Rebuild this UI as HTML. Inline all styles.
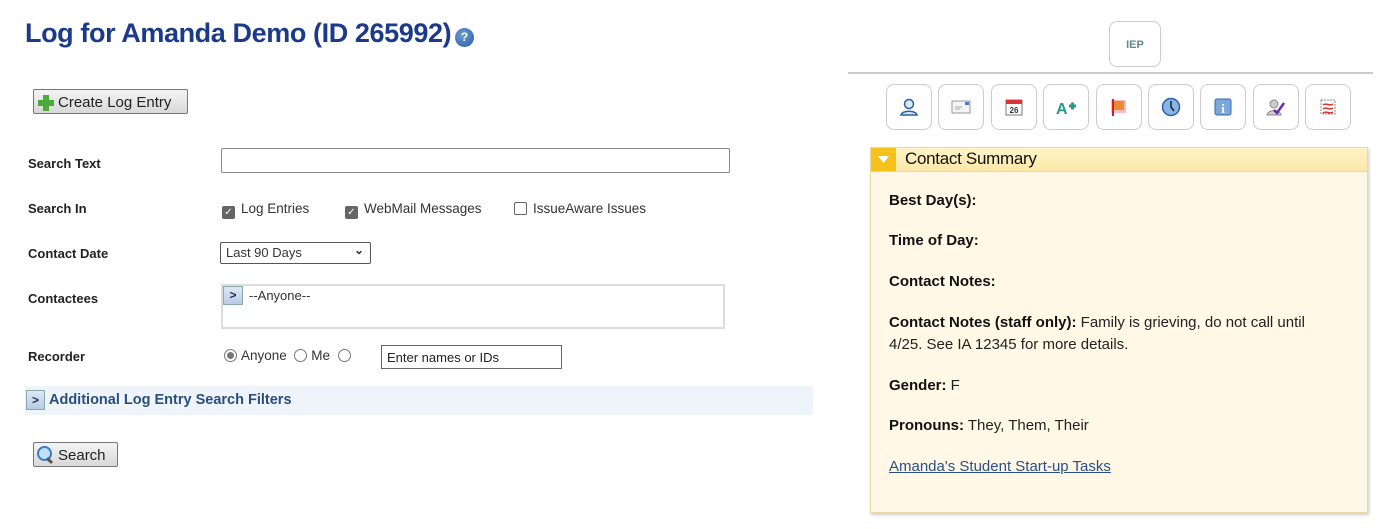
<!DOCTYPE html>
<html><head><style>
body{margin:0;width:1393px;height:529px;background:#fff;font-family:"Liberation Sans",sans-serif;position:relative;overflow:hidden;color:#222}
.a{position:absolute}
h1{position:absolute;left:25px;top:18px;margin:0;font-size:27px;color:#1b3a8a;font-weight:bold;letter-spacing:-0.4px}
.btn{position:absolute;border:1px solid #777;border-radius:2px;background:linear-gradient(#f4f4f4,#d8d8d8);font-size:15px;color:#222;height:25px;line-height:25px;box-sizing:border-box}
.lbl{position:absolute;left:28px;font-size:13px;font-weight:bold;color:#222}
.cb{display:inline-block;width:13px;height:13px;border-radius:2px;vertical-align:-2px;margin-right:6px;box-sizing:border-box}
.on{background:#666;color:#fff;font-size:10px;line-height:13px;text-align:center}
.off{border:1px solid #666}
.t{font-size:13.5px;color:#333}
.rad{display:inline-block;width:13px;height:13px;border:1px solid #777;border-radius:50%;vertical-align:-2px;box-sizing:border-box;margin-right:4px;position:relative}
.ib{position:absolute;top:84px;width:46px;height:46px;border:1px solid #ccc;border-radius:8px;box-sizing:border-box;background:#fff;display:flex;align-items:center;justify-content:center}
.cs p{margin:0;position:absolute;left:18px;font-size:15px;color:#222;width:445px;line-height:22px}
.cs b{color:#111}
</style></head><body>
<h1>Log for Amanda Demo (ID 265992)</h1>
<div class="a" style="left:455px;top:28px;width:19px;height:19px;border-radius:50%;background:radial-gradient(circle at 40% 35%,#6a9ad6,#2a5aa6);color:#fff;font-size:12px;font-weight:bold;text-align:center;line-height:19px">?</div>

<div class="btn" style="left:33px;top:89px;width:155px;padding-left:24px">Create Log Entry
<span class="a" style="left:4px;top:5px;width:16px;height:16px"><span class="a" style="left:5px;top:0;width:6px;height:16px;background:#4caa3a"></span><span class="a" style="left:0;top:5px;width:16px;height:6px;background:#4caa3a"></span></span></div>

<div class="lbl" style="top:156px">Search Text</div>
<div class="a" style="left:221px;top:148px;width:509px;height:25px;border:1px solid #888;box-sizing:border-box;border-radius:2px"></div>

<div class="lbl" style="top:201px">Search In</div>
<div class="a t" style="left:222px;top:201px"><span class="cb on">✓</span>Log Entries</div>
<div class="a t" style="left:345px;top:201px"><span class="cb on">✓</span>WebMail Messages</div>
<div class="a t" style="left:514px;top:201px"><span class="cb off"></span>IssueAware Issues</div>

<div class="lbl" style="top:246px">Contact Date</div>
<div class="a t" style="left:220px;top:242px;width:151px;height:22px;border:1px solid #555;box-sizing:border-box;border-radius:2px;padding:2px 5px;font-size:13px">Last 90 Days<span class="a" style="right:6px;top:0;font-size:12px;font-weight:bold">&#8964;</span></div>

<div class="lbl" style="top:291px">Contactees</div>
<div class="a" style="left:221px;top:284px;width:504px;height:45px;border:2px solid #ddd;box-sizing:border-box"></div>
<div class="a" style="left:223px;top:286px;width:20px;height:19px;background:linear-gradient(#dfe8f5,#b8cbe6);border:1px solid #8aa;box-sizing:border-box;color:#234;font-size:12px;font-weight:bold;text-align:center;line-height:17px">&gt;</div>
<div class="a t" style="left:249px;top:288px;font-size:13px">--Anyone--</div>

<div class="lbl" style="top:349px">Recorder</div>
<div class="a t" style="left:224px;top:348px"><span class="rad"><span class="a" style="left:2px;top:2px;width:7px;height:7px;border-radius:50%;background:#777"></span></span>Anyone &nbsp;<span class="rad"></span>Me &nbsp;<span class="rad"></span></div>
<div class="a" style="left:381px;top:345px;width:181px;height:24px;border:1px solid #666;box-sizing:border-box;font-size:13px;padding:4px 5px;color:#222">Enter names or IDs</div>

<div class="a" style="left:25px;top:386px;width:788px;height:29px;background:#eef4f9"></div>
<div class="a" style="left:26px;top:390px;width:19px;height:20px;background:linear-gradient(#dfe8f5,#b8cbe6);border:1px solid #8aa;box-sizing:border-box;color:#234;font-size:12px;font-weight:bold;text-align:center;line-height:18px">&gt;</div>
<div class="a" style="left:49px;top:392px;font-size:14.5px;font-weight:bold;color:#2a4f7a">Additional Log Entry Search Filters</div>

<div class="btn" style="left:33px;top:442px;width:85px;padding-left:24px">Search
<span class="a" style="left:3px;top:3px;width:11px;height:11px;border-radius:50%;border:2px solid #3a7ac8;background:#bfe0ff"></span><span class="a" style="left:14px;top:14px;width:3px;height:7px;background:#555;transform:rotate(-45deg)"></span></div>

<!-- right -->
<div class="a" style="left:1109px;top:21px;width:52px;height:46px;border:1px solid #ccc;border-radius:8px;box-sizing:border-box;font-size:11px;font-weight:bold;color:#5a8a90;text-align:center;line-height:46px">IEP</div>
<div class="a" style="left:848px;top:72px;width:525px;height:2px;background:#ccc"></div>

<div class="ib" style="left:886px"><svg width="20" height="20"><circle cx="10" cy="7" r="4.5" fill="#dde8f5" stroke="#2b5fa8" stroke-width="1.5"/><path d="M2 18c1-5 15-5 16 0z" fill="#dde8f5" stroke="#2b5fa8" stroke-width="1.5"/></svg></div>
<div class="ib" style="left:938px"><svg width="20" height="16"><rect x="1" y="2" width="18" height="12" fill="#f4f4f4" stroke="#999"/><rect x="14" y="3" width="4" height="3" fill="#4a7ac0"/><path d="M4 8h7M4 10h5" stroke="#aaa"/></svg></div>
<div class="ib" style="left:991px"><svg width="18" height="18"><rect x="1" y="2" width="16" height="15" fill="#fff" stroke="#777"/><rect x="1" y="2" width="16" height="4" fill="#d33"/><text x="9" y="15" font-size="8" font-family="Liberation Sans" font-weight="bold" text-anchor="middle" fill="#333">26</text></svg></div>
<div class="ib" style="left:1043px"><svg width="22" height="18"><text x="1" y="16" font-size="16" font-family="Liberation Sans" font-weight="bold" fill="#2a9a8a">A</text><path d="M14 8h7M17.5 4.5v7" stroke="#2a9a8a" stroke-width="3"/></svg></div>
<div class="ib" style="left:1096px"><svg width="18" height="20"><rect x="1" y="3" width="15" height="13" fill="#f6c0c0"/><path d="M3 2v17" stroke="#c22" stroke-width="2"/><rect x="4" y="4" width="10" height="9" fill="#e83"/></svg></div>
<div class="ib" style="left:1148px"><svg width="20" height="20"><circle cx="10" cy="10" r="8.5" fill="#8ab4e4" stroke="#2b5fa8" stroke-width="1.5"/><path d="M10 4v6l3 4" stroke="#123" stroke-width="1.5" fill="none"/></svg></div>
<div class="ib" style="left:1200px"><svg width="18" height="18"><rect x="1" y="1" width="16" height="16" rx="2" fill="#7aa8dc" stroke="#3a6aaa"/><text x="9" y="15" font-size="13" font-family="Liberation Serif" font-weight="bold" text-anchor="middle" fill="#fff">i</text></svg></div>
<div class="ib" style="left:1253px"><svg width="20" height="18"><circle cx="8" cy="6" r="4" fill="#ccc" stroke="#888"/><path d="M1 17c1-6 13-6 14 0z" fill="#ccc" stroke="#888"/><path d="M8 12l3 3 7-10" stroke="#6a2ab0" stroke-width="2.5" fill="none"/></svg></div>
<div class="ib" style="left:1305px"><svg width="20" height="20"><rect x="3" y="3" width="14" height="14" fill="#fff" stroke="#888" stroke-dasharray="2 1"/><path d="M5 8c4-3 6 2 10-1M5 12c4-3 6 2 10-1M5 16c4-3 6 2 10-1" stroke="#d33" stroke-width="1.5" fill="none"/></svg></div>

<div class="a cs" style="left:870px;top:147px;width:498px;height:366px;background:#fff8e6;border:1px solid #ead9a3;box-sizing:border-box;box-shadow:1px 2px 3px #ccc">
<div class="a" style="left:0;top:0;width:496px;height:23px;background:linear-gradient(#fff3c8,#fbe8a8);border-bottom:1px solid #f0d78a"></div>
<div class="a" style="left:0;top:0;width:25px;height:23px;background:#f5c21b"></div>
<svg class="a" style="left:6px;top:7px" width="13" height="9"><path d="M1 1h11l-5.5 7z" fill="#fff"/></svg>
<div class="a" style="left:34px;top:0px;font-size:17px;color:#111;line-height:21px;letter-spacing:-0.3px">Contact Summary</div>
<p style="top:42px"><b>Best Day(s):</b></p>
<p style="top:82px"><b>Time of Day:</b></p>
<p style="top:123px"><b>Contact Notes:</b></p>
<p style="top:164px"><b>Contact Notes (staff only):</b> Family is grieving, do not call until<br>4/25. See IA 12345 for more details.</p>
<p style="top:227px"><b>Gender:</b> F</p>
<p style="top:267px"><b>Pronouns:</b> They, Them, Their</p>
<p style="top:308px"><span style="color:#2a4f8a;text-decoration:underline">Amanda's Student Start-up Tasks</span></p>
</div>
</body></html>
